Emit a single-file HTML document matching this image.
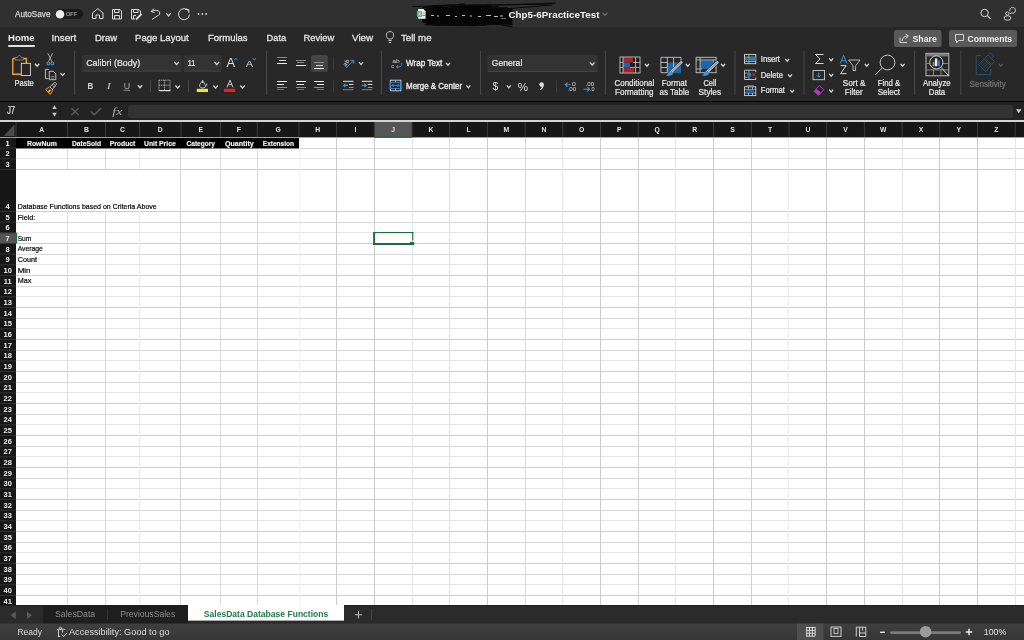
<!DOCTYPE html>
<html><head><meta charset="utf-8"><style>
html,body{margin:0;padding:0;width:1024px;height:640px;overflow:hidden;background:#262626;}
svg{position:absolute;left:0;top:0;display:block;will-change:transform;}
</style></head><body>
<svg width="1024" height="640" viewBox="0 0 1024 640">
<rect x="0" y="0" width="1024" height="27" fill="#303030" />
<rect x="0" y="27" width="1024" height="74" fill="#282828" />
<rect x="0" y="101" width="1024" height="1" fill="#050505" />
<rect x="0" y="102" width="1024" height="18" fill="#232323" />
<rect x="0" y="120" width="1024" height="2" fill="#d4d4d4" />
<rect x="0" y="122" width="1024" height="16" fill="#171717" />
<rect x="0" y="138" width="1024" height="467" fill="#ffffff" />
<text x="15" y="17" font-size="8.6" fill="#d6d6d6" style="font-family:&quot;Liberation Sans&quot;,sans-serif" textLength="35.5" lengthAdjust="spacingAndGlyphs" stroke="#d6d6d6" stroke-width="0.25" >AutoSave</text>
<rect x="55" y="9" width="28" height="10" fill="#1a1a1a" rx="5" />
<circle cx="60" cy="14.2" r="4.3" fill="#ececec"/>
<text x="66" y="16.3" font-size="5.6" fill="#a8a8a8" style="font-family:&quot;Liberation Sans&quot;,sans-serif" textLength="11" lengthAdjust="spacingAndGlyphs" stroke="#a8a8a8" stroke-width="0.15" >OFF</text>
<path d="M92.5 18.5 V13 L97.8 8.5 L103 13 V18.5 H99.5 V15 H96 V18.5 Z" stroke="#d8d8d8" stroke-width="1" fill="none" />
<path d="M112.5 9.5 H120 L121.5 11 V19 H112.5 Z M114.5 9.5 V12.5 H119 V9.5 M114.5 19 V15.5 H119.5 V19" stroke="#d8d8d8" stroke-width="1" fill="none" />
<path d="M131.5 9.5 H139 L140.5 11 V14 M131.5 9.5 V19 H135 M133.5 9.5 V12.5 H138 V9.5 M133.5 19 V15.5 H136" stroke="#d8d8d8" stroke-width="1" fill="none" />
<path d="M136 19.5 L141.5 14" stroke="#d8d8d8" stroke-width="1.8" fill="none" />
<path d="M151 11.5 L154 8.5 M151 11.5 L154.5 12.5 M151.3 11.5 C156 9 161 10.5 159.5 14.5 L152 19.5" stroke="#d8d8d8" stroke-width="1" fill="none" />
<path d="M166.25 13.1 L168.5 15.9 L170.75 13.1" stroke="#cfcfcf" stroke-width="1.25" fill="none" />
<path d="M188.5 11 A5.5 5.5 0 1 0 189.5 14.5" stroke="#d8d8d8" stroke-width="1" fill="none" />
<path d="M185 9.2 L188.8 9.5 L188.8 13" stroke="#d8d8d8" stroke-width="1" fill="none" />
<circle cx="198.5" cy="14" r="0.9" fill="#d8d8d8"/>
<circle cx="202.3" cy="14" r="0.9" fill="#d8d8d8"/>
<circle cx="206.1" cy="14" r="0.9" fill="#d8d8d8"/>
<rect x="425.8" y="7.5" width="84" height="16.5" fill="#060606" rx="3" />
<rect x="422" y="10" width="10" height="13" fill="#060606" rx="3" />
<path d="M445.9 18.4 L466.2 15.8 M462.9 7.1 L490.7 7.1 M423.0 7.3 L453.2 4.9 M454.0 8.4 L497.9 6.7 M470.2 17.0 L512.0 16.3 M498.1 22.3 L512.0 21.0 M431.5 11.9 L450.7 13.8 M434.5 18.1 L469.8 17.4 M463.8 7.1 L481.0 5.4 M474.4 12.0 L504.4 12.5 M456.3 21.1 L481.7 22.3 M439.5 16.0 L474.6 18.2 M478.4 24.6 L503.4 22.3 M453.4 8.9 L494.9 8.8 M423.1 20.5 L461.5 21.0 M490.0 19.2 L512.0 19.8 M466.4 22.0 L497.4 24.6 M457.9 7.2 L496.2 8.4 M471.8 21.6 L512.0 20.3 M450.9 6.4 L489.3 6.2 M433.4 7.1 L452.5 8.7 M430.3 13.4 L454.0 15.7 M426.4 16.4 L457.2 18.7 M485.5 11.3 L512.0 10.8 M448.7 24.2 L494.6 22.1 M434.1 10.4 L457.2 10.3 M467.1 6.1 L491.3 5.6 M449.5 24.1 L484.4 25.3 M461.2 18.8 L497.9 16.2 M492.0 22.6 L512.0 24.4 M451.4 8.0 L480.4 8.8 M425.0 10.0 L442.3 7.9 M447.2 6.0 L464.0 3.9 M428.1 6.5 L455.8 8.7 M469.1 10.8 L489.3 9.9 M449.1 22.1 L468.4 25.1 M457.3 7.6 L489.2 5.2 M447.4 21.7 L471.7 19.7 M421.8 16.0 L470.1 13.9 M463.5 16.0 L479.4 18.9 M489.1 11.0 L512.0 10.2 M433.4 16.1 L475.4 17.8 M446.4 21.4 L469.2 24.3 M488.2 21.5 L512.0 23.0 M438.1 12.8 L471.3 9.9 M422.2 10.9 L447.0 12.1 M496.5 23.8 L512.0 26.7 M496.4 10.2 L512.0 8.5 M435.7 17.9 L457.9 20.3 M487.2 18.4 L512.0 20.2 M426.8 23.3 L464.9 25.0 M480.0 9.4 L511.7 11.1 M446.6 24.5 L489.6 23.8 M452.1 19.8 L500.2 17.8 M430.2 23.2 L450.5 25.0 M431.7 24.6 L475.6 25.6 M448.0 8.5 L482.2 5.6 M497.7 16.0 L512.0 18.6 M454.7 21.7 L500.2 20.0 M440.1 10.6 L465.4 11.1 M440.7 8.5 L470.4 11.0 M448.3 17.1 L479.3 19.5 M453.7 15.5 L500.8 15.7 M461.9 14.4 L477.5 12.5 M420.3 9.3 L463.3 9.1 M478.0 12.2 L512.0 12.3 M464.4 8.0 L506.9 8.4 M439.9 20.7 L464.6 20.7 M464.9 23.3 L506.5 23.0 M469.0 15.7 L501.7 16.9" stroke="#050505" stroke-width="1.3" fill="none" stroke-linecap="round"/>
<path d="M413 6.5 C450 5 500 6 555 3.2" stroke="#0a0a0a" stroke-width="1.2" fill="none" stroke-linecap="round"/>
<path d="M432 5.5 C470 4.5 520 4.8 548 4" stroke="#0a0a0a" stroke-width="0.9" fill="none" stroke-linecap="round"/>
<path d="M505 9 C520 7.5 535 6.5 552 5" stroke="#0a0a0a" stroke-width="1.0" fill="none" stroke-linecap="round"/>
<path d="M425 24.5 C450 25.5 480 25 510 23.5" stroke="#0a0a0a" stroke-width="1.3" fill="none" stroke-linecap="round"/>
<rect x="431" y="15" width="3" height="1" fill="#bdbdbd" />
<rect x="437" y="15.5" width="2" height="1" fill="#bdbdbd" />
<rect x="446" y="15" width="4" height="1" fill="#bdbdbd" />
<rect x="455" y="16" width="2" height="1" fill="#bdbdbd" />
<rect x="462" y="15" width="3" height="1" fill="#bdbdbd" />
<rect x="470" y="15.5" width="2" height="1" fill="#bdbdbd" />
<rect x="478" y="16" width="3" height="1" fill="#bdbdbd" />
<rect x="486" y="15" width="5" height="1" fill="#bdbdbd" />
<rect x="494" y="16" width="4" height="1" fill="#bdbdbd" />
<rect x="500" y="15.5" width="3" height="1" fill="#bdbdbd" />
<path d="M418.2 9 H423.4 L425.6 11.2 V18.7 H418.2 Z" stroke="none" stroke-width="1" fill="#f4f4f4" />
<rect x="416.9" y="11" width="5.3" height="5.9" fill="#5db487" rx="0.6" />
<path d="M418.7 12.4 L420.6 15.6 M420.6 12.4 L418.7 15.6" stroke="#f4f4f4" stroke-width="0.7" fill="none" />
<rect x="423" y="12.6" width="2.4" height="1.3" fill="#7cc9a0" />
<rect x="422.6" y="15.2" width="3" height="0.6" fill="#333333" />
<text x="501" y="18" font-size="9" fill="#f0f0f0" style="font-family:&quot;Liberation Sans&quot;,sans-serif" font-weight="700" >_</text>
<text x="508.5" y="17.5" font-size="9" fill="#f2f2f2" style="font-family:&quot;Liberation Sans&quot;,sans-serif" font-weight="700" textLength="91" lengthAdjust="spacingAndGlyphs" >Chp5-6PracticeTest</text>
<path d="M602.5 12.75 L605 15.25 L607.5 12.75" stroke="#6a6a6a" stroke-width="1.25" fill="none" />
<circle cx="984.6" cy="13" r="3.7" fill="none" stroke="#d8d8d8" stroke-width="1"/>
<path d="M987.3 15.7 L990.6 18.9" stroke="#d8d8d8" stroke-width="1.1" fill="none" />
<circle cx="1007.4" cy="13.6" r="1.7" fill="none" stroke="#d8d8d8" stroke-width="0.9"/>
<ellipse cx="1007.5" cy="18" rx="3.4" ry="2.2" fill="none" stroke="#d8d8d8" stroke-width="0.9"/>
<path d="M1010.2 14 L1011 12.8 A2.9 2.9 0 1 0 1009.8 11.2" stroke="#d8d8d8" stroke-width="0.9" fill="none" />
<text x="8" y="40.8" font-size="9.8" fill="#eeeeee" style="font-family:&quot;Liberation Sans&quot;,sans-serif" font-weight="700" textLength="26.5" lengthAdjust="spacingAndGlyphs" >Home</text>
<rect x="8" y="45" width="27" height="2" fill="#e0e0e0" rx="1" />
<text x="51.5" y="40.8" font-size="9.8" fill="#e2e2e2" style="font-family:&quot;Liberation Sans&quot;,sans-serif" textLength="24.700000000000003" lengthAdjust="spacingAndGlyphs" stroke="#e2e2e2" stroke-width="0.3" >Insert</text>
<text x="95" y="40.8" font-size="9.8" fill="#e2e2e2" style="font-family:&quot;Liberation Sans&quot;,sans-serif" textLength="22.200000000000003" lengthAdjust="spacingAndGlyphs" stroke="#e2e2e2" stroke-width="0.3" >Draw</text>
<text x="135" y="40.8" font-size="9.8" fill="#e2e2e2" style="font-family:&quot;Liberation Sans&quot;,sans-serif" textLength="53.80000000000001" lengthAdjust="spacingAndGlyphs" stroke="#e2e2e2" stroke-width="0.3" >Page Layout</text>
<text x="208" y="40.8" font-size="9.8" fill="#e2e2e2" style="font-family:&quot;Liberation Sans&quot;,sans-serif" textLength="39.599999999999994" lengthAdjust="spacingAndGlyphs" stroke="#e2e2e2" stroke-width="0.3" >Formulas</text>
<text x="266.6" y="40.8" font-size="9.8" fill="#e2e2e2" style="font-family:&quot;Liberation Sans&quot;,sans-serif" textLength="19.599999999999966" lengthAdjust="spacingAndGlyphs" stroke="#e2e2e2" stroke-width="0.3" >Data</text>
<text x="303.5" y="40.8" font-size="9.8" fill="#e2e2e2" style="font-family:&quot;Liberation Sans&quot;,sans-serif" textLength="30.69999999999999" lengthAdjust="spacingAndGlyphs" stroke="#e2e2e2" stroke-width="0.3" >Review</text>
<text x="352" y="40.8" font-size="9.8" fill="#e2e2e2" style="font-family:&quot;Liberation Sans&quot;,sans-serif" textLength="21.19999999999999" lengthAdjust="spacingAndGlyphs" stroke="#e2e2e2" stroke-width="0.3" >View</text>
<text x="401" y="40.8" font-size="9.8" fill="#e2e2e2" style="font-family:&quot;Liberation Sans&quot;,sans-serif" textLength="30.5" lengthAdjust="spacingAndGlyphs" stroke="#e2e2e2" stroke-width="0.3" >Tell me</text>
<path d="M388.2 39 C386.6 37.2 386.4 35.8 386.4 35 C386.4 32.8 388 31.6 390 31.6 C392 31.6 393.6 32.8 393.6 35 C393.6 35.8 393.4 37.2 391.8 39 Z" stroke="#d0d0d0" stroke-width="0.9" fill="none" />
<rect x="388.5" y="40" width="3" height="1" fill="#d0d0d0" />
<rect x="388.8" y="42" width="2.4" height="1" fill="#d0d0d0" />
<rect x="894" y="30" width="47.5" height="17" fill="#5a5a5a" rx="2.5" />
<rect x="949" y="30" width="68" height="17" fill="#5a5a5a" rx="2.5" />
<path d="M900 37.5 V42.5 H907" stroke="#dedede" stroke-width="0.9" fill="none" />
<path d="M902 41 C902.5 37.5 904.5 36 907.5 36 M905.5 34 L908.5 36 L905.5 38.5" stroke="#dedede" stroke-width="0.9" fill="none" />
<text x="912.5" y="42.2" font-size="9" fill="#efefef" style="font-family:&quot;Liberation Sans&quot;,sans-serif" font-weight="700" textLength="24.3" lengthAdjust="spacingAndGlyphs" >Share</text>
<path d="M955.5 34.5 H963.5 V40.5 H958.5 L956.5 43 V40.5 H955.5 Z" stroke="#dedede" stroke-width="0.9" fill="none" />
<text x="967.5" y="42.2" font-size="9" fill="#efefef" style="font-family:&quot;Liberation Sans&quot;,sans-serif" font-weight="700" textLength="44.6" lengthAdjust="spacingAndGlyphs" >Comments</text>
<path d="M12.8 58.5 H15.3 M23.6 58.5 H26.3 V63 M12.8 58.5 V74.3 H21" stroke="#f0a030" stroke-width="1.4" fill="none" />
<path d="M15.2 60 V57.6 H17.6 C17.8 56.2 18.5 55.4 19.4 55.4 C20.3 55.4 21 56.2 21.2 57.6 H23.6 V60 Z" stroke="#8a8a8a" stroke-width="0.9" fill="#262626" />
<rect x="21.3" y="63.3" width="9.1" height="12.2" fill="#262626" stroke="#dadada" stroke-width="0.9"/>
<path d="M35.0 63.75 L37.1 66.25 L39.2 63.75" stroke="#e0e0e0" stroke-width="1.25" fill="none" />
<text x="14.5" y="85.9" font-size="8.2" fill="#e8e8e8" style="font-family:&quot;Liberation Sans&quot;,sans-serif" textLength="19.2" lengthAdjust="spacingAndGlyphs" stroke="#e8e8e8" stroke-width="0.22" >Paste</text>
<path d="M47.8 53.2 L52 61.8 M52.6 53.2 L48.4 61.8" stroke="#c8c8c8" stroke-width="0.8" fill="none" />
<circle cx="48.3" cy="63.4" r="1.35" fill="none" stroke="#3a96dd" stroke-width="1.1"/><circle cx="52.3" cy="63.4" r="1.35" fill="none" stroke="#3a96dd" stroke-width="1.1"/>
<path d="M48.8 69.4 H45.4 V78.6 H48.6" stroke="#d0d0d0" stroke-width="0.9" fill="none" />
<path d="M49.3 71.3 H53.3 L55.8 73.8 V79.7 H49.3 Z" stroke="#d0d0d0" stroke-width="0.9" fill="none" />
<rect x="50.8" y="76.2" width="3.5" height="1" fill="#9a9a9a" />
<rect x="50.8" y="78" width="3.5" height="0.8" fill="#6a6a6a" />
<path d="M60.5 73.15 L62.6 75.65 L64.7 73.15" stroke="#e0e0e0" stroke-width="1.25" fill="none" />
<path d="M45.6 89.6 L49.8 86.8 L53 90 L50.2 94.4 Z" stroke="#f0a030" stroke-width="1" fill="#262626" />
<path d="M47.5 91.5 L50 89 L51.2 90.2 L49 93 Z" stroke="none" stroke-width="1" fill="#f0a030" />
<path d="M50.2 86.5 L54 82.9 C54.8 82.2 55.8 82.6 56.2 83.2 C56.6 83.9 56.4 84.6 55.8 85.2 L52.6 89.2" stroke="#cfcfcf" stroke-width="0.9" fill="none" />
<path d="M52.3 85.2 L54.5 87.2 M53.5 84 L55.5 85.9" stroke="#cfcfcf" stroke-width="0.7" fill="none" />
<rect x="74" y="51" width="1" height="44" fill="#474747" />
<rect x="82" y="55" width="99.5" height="16.5" fill="#333333" rx="2.5" />
<rect x="183.5" y="55" width="38" height="16.5" fill="#333333" rx="2.5" />
<rect x="82.5" y="70.6" width="98.5" height="0.9" fill="#484848" />
<rect x="184" y="70.6" width="37" height="0.9" fill="#484848" />
<text x="86.2" y="65.8" font-size="8.8" fill="#e6e6e6" style="font-family:&quot;Liberation Sans&quot;,sans-serif" textLength="54" lengthAdjust="spacingAndGlyphs" stroke="#e6e6e6" stroke-width="0.2" >Calibri (Body)</text>
<path d="M174.35 62.0 L176.6 64.6 L178.85 62.0" stroke="#d8d8d8" stroke-width="1.25" fill="none" />
<text x="187.8" y="65.8" font-size="8.8" fill="#e6e6e6" style="font-family:&quot;Liberation Sans&quot;,sans-serif" textLength="7.5" lengthAdjust="spacingAndGlyphs" stroke="#e6e6e6" stroke-width="0.2" >11</text>
<path d="M214.55 62.0 L216.8 64.6 L219.05 62.0" stroke="#d8d8d8" stroke-width="1.25" fill="none" />
<text x="226.6" y="67" font-size="12" fill="#dcdcdc" style="font-family:&quot;Liberation Sans&quot;,sans-serif" textLength="8.6" lengthAdjust="spacingAndGlyphs" >A</text>
<path d="M234.4 60.2 L235.9 58.2 L237.4 60.2" stroke="#3a96dd" stroke-width="1" fill="none" />
<text x="245.8" y="67" font-size="9" fill="#dcdcdc" style="font-family:&quot;Liberation Sans&quot;,sans-serif" textLength="7.4" lengthAdjust="spacingAndGlyphs" >A</text>
<path d="M252.8 58.2 L254.3 60.2 L255.8 58.2" stroke="#3a96dd" stroke-width="1" fill="none" />
<text x="87.4" y="88.6" font-size="9" fill="#d8d8d8" style="font-family:&quot;Liberation Sans&quot;,sans-serif" font-weight="700" textLength="5.8" lengthAdjust="spacingAndGlyphs" >B</text>
<text x="106.5" y="88.6" font-size="9" fill="#bcbcbc" style="font-family:&quot;Liberation Serif&quot;,serif" font-style="italic" textLength="4.5" lengthAdjust="spacingAndGlyphs" >I</text>
<text x="123.7" y="88.6" font-size="9" fill="#a8a8a8" style="font-family:&quot;Liberation Sans&quot;,sans-serif" textLength="6.4" lengthAdjust="spacingAndGlyphs" >U</text>
<rect x="123.5" y="89.8" width="6.5" height="0.8" fill="#a8a8a8" />
<path d="M137.9 85.25 L140 87.75 L142.1 85.25" stroke="#d8d8d8" stroke-width="1.25" fill="none" />
<rect x="150" y="80" width="1" height="12.3" fill="#474747" />
<path d="M159 80.2 H170 M159 85.2 H170 M159 80.2 V90 M170 80.2 V90 M164.5 80.2 V90" stroke="#c8c8c8" stroke-width="0.9" fill="none" stroke-dasharray="1.2 0.9"/>
<rect x="158.7" y="90" width="11.8" height="1.2" fill="#e0e0e0" />
<path d="M175.45 85.5 L177.7 88.1 L179.95 85.5" stroke="#d8d8d8" stroke-width="1.25" fill="none" />
<rect x="188" y="80" width="1" height="12" fill="#474747" />
<path d="M202.6 80.4 C201.5 82.5 199.6 84 199.6 85.6 C199.6 87.2 200.9 88 202.8 88 C204.6 88 205.6 87 205.6 85.8 L202.6 80.4 Z M202.6 80.4 V83" stroke="#d8d8d8" stroke-width="0.9" fill="none" />
<path d="M206.7 83.2 V86.3" stroke="#3a96dd" stroke-width="1.3" fill="none" />
<rect x="196.8" y="88.8" width="11.2" height="3.2" fill="#f3e81d" />
<path d="M213.35 85.5 L215.6 88.1 L217.85 85.5" stroke="#d8d8d8" stroke-width="1.25" fill="none" />
<path d="M227 87.3 L230 80.2 L233 87.3 M228.2 84.7 H231.8" stroke="#d8d8d8" stroke-width="0.9" fill="none" />
<rect x="223.9" y="88.8" width="11.4" height="3.2" fill="#ec1c24" />
<path d="M240.25 85.5 L242.5 88.1 L244.75 85.5" stroke="#d8d8d8" stroke-width="1.25" fill="none" />
<rect x="266" y="51" width="1" height="44" fill="#474747" />
<rect x="277" y="57" width="10" height="1" fill="#8a8a8a" />
<rect x="279" y="60" width="7" height="1" fill="#d8d8d8" />
<rect x="277" y="63" width="10" height="1" fill="#f0f0f0" />
<rect x="296" y="60" width="10" height="1" fill="#8a8a8a" />
<rect x="297" y="62" width="7" height="1" fill="#8a8a8a" />
<rect x="296" y="65" width="10" height="1" fill="#e8e8e8" />
<rect x="311" y="55" width="16.8" height="16.7" fill="#454545" rx="2.5" />
<rect x="314" y="62" width="10" height="1" fill="#8a8a8a" />
<rect x="316" y="65" width="7" height="1" fill="#d8d8d8" />
<rect x="314" y="68" width="10" height="1" fill="#f4f4f4" />
<rect x="333" y="56.8" width="1" height="13" fill="#3a3a3a" />
<text x="341.5" y="65" font-size="6.4" fill="#d8d8d8" style="font-family:&quot;Liberation Sans&quot;,sans-serif" textLength="7.2" lengthAdjust="spacingAndGlyphs" transform="rotate(-60 345.5 62)">ab</text>
<path d="M346.2 68 L353.6 60.6 M350.4 60.4 H353.8 V63.8" stroke="#3a96dd" stroke-width="1" fill="none" />
<path d="M359.0 62.05 L361 64.55 L363.0 62.05" stroke="#d8d8d8" stroke-width="1.25" fill="none" />
<rect x="277" y="81" width="10" height="1" fill="#f0f0f0" />
<rect x="277" y="84" width="7" height="1" fill="#e8e8e8" />
<rect x="277" y="87" width="10" height="1" fill="#8e8e8e" />
<rect x="277" y="89" width="7" height="1" fill="#6e6e6e" />
<rect x="296" y="81" width="10" height="1" fill="#f0f0f0" />
<rect x="297" y="84" width="7" height="1" fill="#e8e8e8" />
<rect x="296" y="87" width="10" height="1" fill="#8e8e8e" />
<rect x="297" y="89" width="7" height="1" fill="#6e6e6e" />
<rect x="314" y="81" width="10" height="1" fill="#f0f0f0" />
<rect x="317" y="84" width="7" height="1" fill="#e8e8e8" />
<rect x="314" y="87" width="10" height="1" fill="#8e8e8e" />
<rect x="317" y="89" width="7" height="1" fill="#6e6e6e" />
<rect x="333" y="79.6" width="1" height="12.4" fill="#3a3a3a" />
<rect x="343" y="80.8" width="10.5" height="1" fill="#e8e8e8" />
<rect x="349" y="83.9" width="4.5" height="1" fill="#e0e0e0" />
<rect x="349" y="87" width="4.5" height="1" fill="#9a9a9a" />
<rect x="343" y="89.3" width="10.5" height="0.9" fill="#8a8a8a" />
<rect x="361.8" y="80.8" width="10.5" height="1" fill="#e8e8e8" />
<rect x="367.8" y="83.9" width="4.5" height="1" fill="#e0e0e0" />
<rect x="367.8" y="87" width="4.5" height="1" fill="#9a9a9a" />
<rect x="361.8" y="89.3" width="10.5" height="0.9" fill="#8a8a8a" />
<path d="M343.6 85.4 H348 M345.4 83.6 L343.6 85.4 L345.4 87.2" stroke="#3a96dd" stroke-width="1.1" fill="none" />
<path d="M361.8 85.4 H366.2 M364.4 83.6 L366.2 85.4 L364.4 87.2" stroke="#3a96dd" stroke-width="1.1" fill="none" />
<rect x="381" y="51" width="1" height="44" fill="#474747" />
<text x="392.2" y="63" font-size="5.6" fill="#d0d0d0" style="font-family:&quot;Liberation Sans&quot;,sans-serif" textLength="7.6" lengthAdjust="spacingAndGlyphs" >ab</text>
<text x="391.3" y="67.6" font-size="5.6" fill="#d0d0d0" style="font-family:&quot;Liberation Sans&quot;,sans-serif" textLength="3" lengthAdjust="spacingAndGlyphs" >c</text>
<path d="M401.6 62.8 V64.6 C401.6 66.2 400.6 66.8 399 66.8 H396.4 M398 65.2 L396.4 66.8 L398 68.4" stroke="#3a96dd" stroke-width="1" fill="none" />
<text x="406" y="66.1" font-size="8.2" fill="#e8e8e8" style="font-family:&quot;Liberation Sans&quot;,sans-serif" textLength="36.3" lengthAdjust="spacingAndGlyphs" stroke="#e8e8e8" stroke-width="0.35" >Wrap Text</text>
<path d="M446.0 62.8 L448 65.2 L450.0 62.8" stroke="#d8d8d8" stroke-width="1.25" fill="none" />
<rect x="390.3" y="80.2" width="10.6" height="10.6" fill="none" stroke="#d8d8d8" stroke-width="0.9"/>
<rect x="390.3" y="82.3" width="10.6" height="6.2" fill="none" stroke="#2a86d8" stroke-width="0.9"/>
<rect x="395.3" y="80.2" width="0.7" height="2" fill="#bbbbbb" />
<rect x="395.3" y="88.6" width="0.7" height="2.2" fill="#bbbbbb" />
<path d="M392 85.4 H399.2 M393.4 84 L392 85.4 L393.4 86.8 M397.8 84 L399.2 85.4 L397.8 86.8" stroke="#3a96dd" stroke-width="0.9" fill="none" />
<text x="406" y="88.9" font-size="8.2" fill="#e8e8e8" style="font-family:&quot;Liberation Sans&quot;,sans-serif" textLength="56.2" lengthAdjust="spacingAndGlyphs" stroke="#e8e8e8" stroke-width="0.35" >Merge &amp; Center</text>
<path d="M466.3 85.3 L468.3 87.7 L470.3 85.3" stroke="#d8d8d8" stroke-width="1.25" fill="none" />
<rect x="480" y="51" width="1" height="44" fill="#474747" />
<rect x="487.3" y="55" width="110.5" height="17" fill="#333333" rx="2.5" />
<rect x="487.8" y="71" width="109.5" height="0.9" fill="#484848" />
<text x="491.7" y="66.1" font-size="8.8" fill="#ececec" style="font-family:&quot;Liberation Sans&quot;,sans-serif" textLength="30.6" lengthAdjust="spacingAndGlyphs" stroke="#ececec" stroke-width="0.2" >General</text>
<path d="M589.95 62.5 L592.2 65.1 L594.45 62.5" stroke="#d8d8d8" stroke-width="1.25" fill="none" />
<text x="492.6" y="90.4" font-size="11" fill="#dcdcdc" style="font-family:&quot;Liberation Sans&quot;,sans-serif" textLength="5.8" lengthAdjust="spacingAndGlyphs" >$</text>
<path d="M506.8 85.39999999999999 L508.8 87.8 L510.8 85.39999999999999" stroke="#d8d8d8" stroke-width="1.25" fill="none" />
<text x="517.8" y="90.6" font-size="11.5" fill="#dcdcdc" style="font-family:&quot;Liberation Sans&quot;,sans-serif" textLength="10.3" lengthAdjust="spacingAndGlyphs" >%</text>
<circle cx="541.6" cy="84.6" r="2.3" fill="#dcdcdc"/>
<path d="M543.6 85 C543.8 87.5 542.5 89.2 540.2 89.9 L539.8 89.2 C541.2 88.5 541.8 87.5 541.8 86.2 Z" stroke="none" stroke-width="1" fill="#dcdcdc" />
<rect x="556" y="80" width="1" height="12" fill="#3a3a3a" />
<path d="M565.3 84.7 H570.5 M567.5 82.6 L565.3 84.7 L567.5 86.8" stroke="#3a96dd" stroke-width="1.1" fill="none" />
<text x="572" y="86.3" font-size="6" fill="#dcdcdc" style="font-family:&quot;Liberation Sans&quot;,sans-serif" textLength="3.8" lengthAdjust="spacingAndGlyphs" >0</text>
<text x="567.5" y="91.3" font-size="6" fill="#dcdcdc" style="font-family:&quot;Liberation Sans&quot;,sans-serif" textLength="8.6" lengthAdjust="spacingAndGlyphs" >.00</text>
<text x="585.5" y="86.3" font-size="6" fill="#dcdcdc" style="font-family:&quot;Liberation Sans&quot;,sans-serif" textLength="8.6" lengthAdjust="spacingAndGlyphs" >.00</text>
<path d="M583.5 89.2 H589.5 M587.3 87.1 L589.5 89.2 L587.3 91.3" stroke="#3a96dd" stroke-width="1.1" fill="none" />
<text x="590" y="91.3" font-size="6" fill="#dcdcdc" style="font-family:&quot;Liberation Sans&quot;,sans-serif" textLength="4.6" lengthAdjust="spacingAndGlyphs" >.0</text>
<rect x="605" y="51" width="1" height="44" fill="#474747" />
<rect x="620" y="57" width="20" height="16" fill="#1c1c1c" />
<rect x="623" y="57.3" width="10" height="5.1" fill="#a82228" />
<rect x="623" y="67.3" width="11.3" height="5.4" fill="#a82228" />
<rect x="623" y="62.5" width="6.9" height="4.7" fill="#1f66b0" />
<rect x="620" y="57" width="20" height="16" fill="none" stroke="#c4c4c4" stroke-width="0.9"/>
<rect x="622.6" y="57" width="0.9" height="16" fill="#c4c4c4" />
<rect x="635.2" y="57" width="0.9" height="16" fill="#c4c4c4" />
<rect x="620" y="62.1" width="3" height="0.8" fill="#c4c4c4" />
<rect x="620" y="66.9" width="3" height="0.8" fill="#c4c4c4" />
<rect x="634.3" y="62.1" width="5.7" height="0.8" fill="#c4c4c4" />
<rect x="629.9" y="66.9" width="10" height="0.8" fill="#c4c4c4" />
<rect x="633" y="62.1" width="2.5" height="0.8" fill="#c4c4c4" />
<path d="M645.0 63.8 L647 66.2 L649.0 63.8" stroke="#e0e0e0" stroke-width="1.25" fill="none" />
<text x="614.5" y="85.9" font-size="8.7" fill="#e8e8e8" style="font-family:&quot;Liberation Sans&quot;,sans-serif" textLength="39.8" lengthAdjust="spacingAndGlyphs" stroke="#e8e8e8" stroke-width="0.22" >Conditional</text>
<text x="615" y="94.5" font-size="8.7" fill="#e8e8e8" style="font-family:&quot;Liberation Sans&quot;,sans-serif" textLength="38.6" lengthAdjust="spacingAndGlyphs" stroke="#e8e8e8" stroke-width="0.22" >Formatting</text>
<rect x="667.25" y="62.5" width="13.75" height="10.2" fill="#1f66b0" />
<rect x="660.4499999999999" y="57.3" width="0.9" height="15.4" fill="#c4c4c4" />
<rect x="666.8" y="57.3" width="0.9" height="15.4" fill="#c4c4c4" />
<rect x="673.15" y="57.3" width="0.9" height="15.4" fill="#c4c4c4" />
<rect x="680.55" y="57.3" width="0.9" height="5" fill="#c4c4c4" />
<rect x="660.9" y="56.849999999999994" width="20.1" height="0.9" fill="#c4c4c4" />
<rect x="660.9" y="62.05" width="6.35" height="0.9" fill="#c4c4c4" />
<rect x="660.9" y="67.05" width="6.35" height="0.9" fill="#c4c4c4" />
<rect x="660.9" y="72.25" width="6.35" height="0.9" fill="#c4c4c4" />
<rect x="673.6" y="72.25" width="7.4" height="0.9" fill="#1f66b0" />
<path d="M681.3 62.4 L670.8 72.2" stroke="#262626" stroke-width="3.6" fill="none" stroke-linecap="round"/>
<path d="M681.3 62.4 L670.8 72.2" stroke="#d0d0d0" stroke-width="2.6" fill="none" stroke-linecap="round"/>
<path d="M681.3 62.4 L670.8 72.2" stroke="#5a5a5a" stroke-width="0.8" fill="none" />
<path d="M670.5 71.2 C668.5 71.5 668 74.5 665.8 75.5 C669.5 76.5 673.5 75.5 673 72.6 Z" stroke="none" stroke-width="1" fill="#3a96dd" />
<path d="M685.8 63.8 L687.8 66.2 L689.8 63.8" stroke="#e0e0e0" stroke-width="1.25" fill="none" />
<text x="661.7" y="85.9" font-size="8.7" fill="#e8e8e8" style="font-family:&quot;Liberation Sans&quot;,sans-serif" textLength="25.3" lengthAdjust="spacingAndGlyphs" stroke="#e8e8e8" stroke-width="0.22" >Format</text>
<text x="659.5" y="94.5" font-size="8.7" fill="#e8e8e8" style="font-family:&quot;Liberation Sans&quot;,sans-serif" textLength="29.6" lengthAdjust="spacingAndGlyphs" stroke="#e8e8e8" stroke-width="0.22" >as Table</text>
<rect x="700" y="60.1" width="13" height="8.8" fill="#1f66b0" />
<rect x="696.1" y="57.3" width="20" height="15.4" fill="none" stroke="#c4c4c4" stroke-width="0.9"/>
<rect x="699.6" y="57.3" width="0.9" height="15.4" fill="#c4c4c4" />
<rect x="696.1" y="59.5" width="20" height="0.8" fill="#c4c4c4" />
<rect x="696.1" y="68.6" width="6" height="0.8" fill="#c4c4c4" />
<rect x="713" y="59.5" width="0.8" height="3" fill="#c4c4c4" />
<path d="M717.3 62.4 L706.8 72.2" stroke="#262626" stroke-width="3.6" fill="none" stroke-linecap="round"/>
<path d="M717.3 62.4 L706.8 72.2" stroke="#d0d0d0" stroke-width="2.6" fill="none" stroke-linecap="round"/>
<path d="M717.3 62.4 L706.8 72.2" stroke="#5a5a5a" stroke-width="0.8" fill="none" />
<path d="M706.5 71.2 C704.5 71.5 704 74.5 701.8 75.5 C705.5 76.5 709.5 75.5 709 72.6 Z" stroke="none" stroke-width="1" fill="#3a96dd" />
<path d="M721.1 63.8 L723.1 66.2 L725.1 63.8" stroke="#e0e0e0" stroke-width="1.25" fill="none" />
<text x="703.4" y="85.9" font-size="8.7" fill="#e8e8e8" style="font-family:&quot;Liberation Sans&quot;,sans-serif" textLength="13" lengthAdjust="spacingAndGlyphs" stroke="#e8e8e8" stroke-width="0.22" >Cell</text>
<text x="698.6" y="94.5" font-size="8.7" fill="#e8e8e8" style="font-family:&quot;Liberation Sans&quot;,sans-serif" textLength="22.5" lengthAdjust="spacingAndGlyphs" stroke="#e8e8e8" stroke-width="0.22" >Styles</text>
<rect x="734.5" y="51" width="1" height="44" fill="#474747" />
<rect x="744.5" y="54.5" width="11.3" height="9.2" fill="none" stroke="#d0d0d0" stroke-width="0.9"/>
<rect x="744.5" y="56.8" width="11.3" height="0.7" fill="#d0d0d0" />
<rect x="744.5" y="61" width="11.3" height="0.7" fill="#d0d0d0" />
<rect x="748.6" y="54.5" width="0.7" height="9.2" fill="#d0d0d0" />
<rect x="748.8" y="57.6" width="6.8" height="3.2" fill="#1f66b0" />
<path d="M745.2 59.2 H755.6 M747.3 57.2 L745.2 59.2 L747.3 61.2" stroke="#3a96dd" stroke-width="1" fill="none" />
<path d="M744.5 70.2 H755.8 V72 M744.5 70.2 V79.5 H755.8 V77.5" stroke="#d0d0d0" stroke-width="0.9" fill="none" />
<rect x="744.5" y="72.7" width="3" height="0.7" fill="#d0d0d0" />
<rect x="744.5" y="76.8" width="3" height="0.7" fill="#d0d0d0" />
<rect x="748.6" y="70.2" width="0.7" height="3" fill="#d0d0d0" />
<rect x="748.6" y="76.5" width="0.7" height="3" fill="#d0d0d0" />
<rect x="747.3" y="72.8" width="3.8" height="3.8" fill="#2a7ad0" />
<path d="M752 72.6 L755.8 76.6 M755.8 72.6 L752 76.6" stroke="#e03030" stroke-width="1" fill="none" />
<rect x="744.5" y="86.8" width="11.3" height="8.8" fill="none" stroke="#d0d0d0" stroke-width="0.9"/>
<rect x="744.5" y="89.2" width="11.3" height="0.7" fill="#d0d0d0" />
<rect x="744.5" y="92.6" width="11.3" height="0.7" fill="#d0d0d0" />
<rect x="748.2" y="86.8" width="0.7" height="8.8" fill="#d0d0d0" />
<rect x="752" y="86.8" width="0.7" height="8.8" fill="#d0d0d0" />
<rect x="746.5" y="89.6" width="7.2" height="3.3" fill="#1f66b0" />
<path d="M746.8 85.6 H753.6 L754.6 86.6" stroke="#3a96dd" stroke-width="0.9" fill="none" />
<text x="760.8" y="62" font-size="8.7" fill="#e8e8e8" style="font-family:&quot;Liberation Sans&quot;,sans-serif" textLength="19.2" lengthAdjust="spacingAndGlyphs" stroke="#e8e8e8" stroke-width="0.22" >Insert</text>
<path d="M785.2 58.8 L787.2 61.2 L789.2 58.8" stroke="#d8d8d8" stroke-width="1.25" fill="none" />
<text x="760.8" y="77.8" font-size="8.7" fill="#e8e8e8" style="font-family:&quot;Liberation Sans&quot;,sans-serif" textLength="22.2" lengthAdjust="spacingAndGlyphs" stroke="#e8e8e8" stroke-width="0.22" >Delete</text>
<path d="M788.0 74.3 L790 76.7 L792.0 74.3" stroke="#d8d8d8" stroke-width="1.25" fill="none" />
<text x="760.8" y="93" font-size="8.7" fill="#e8e8e8" style="font-family:&quot;Liberation Sans&quot;,sans-serif" textLength="24" lengthAdjust="spacingAndGlyphs" stroke="#e8e8e8" stroke-width="0.22" >Format</text>
<path d="M790.1 89.8 L792.1 92.2 L794.1 89.8" stroke="#d8d8d8" stroke-width="1.25" fill="none" />
<rect x="803.5" y="51" width="1" height="44" fill="#474747" />
<path d="M823.5 54.5 H815.5 L820 59 L815.5 63.5 H823.5" stroke="#d8d8d8" stroke-width="1" fill="none" />
<path d="M829.2 58.3 L831.2 60.7 L833.2 58.3" stroke="#d8d8d8" stroke-width="1.25" fill="none" />
<rect x="813" y="70.5" width="11.5" height="9.2" fill="none" stroke="#cfcfcf" stroke-width="0.9"/>
<path d="M818.7 72.5 V77 M816.8 75.3 L818.7 77.2 L820.6 75.3" stroke="#3a96dd" stroke-width="1" fill="none" />
<path d="M829.2 73.8 L831.2 76.2 L833.2 73.8" stroke="#d8d8d8" stroke-width="1.25" fill="none" />
<path d="M814 91.3 L819.4 85.6 L824 89.6 L818.6 95.3 Z" stroke="#b03cc0" stroke-width="0.9" fill="none" />
<path d="M814 91.3 L816.4 88.7 L821 92.7 L818.6 95.3 Z" stroke="none" stroke-width="1" fill="#b03cc0" />
<path d="M829.2 89.6 L831.2 92.0 L833.2 89.6" stroke="#d8d8d8" stroke-width="1.25" fill="none" />
<path d="M840.2 63.6 L843.6 55.4 L847 63.6 M841.4 60.8 H845.8" stroke="#3a96dd" stroke-width="1" fill="none" />
<path d="M840.6 65.6 H846.2 L840.6 73.6 H846.6" stroke="#d8d8d8" stroke-width="1" fill="none" />
<path d="M848.6 60 H860 L855.6 65.8 V70.6 H853 V65.8 Z" stroke="#d8d8d8" stroke-width="0.8" fill="none" />
<path d="M864.8 63.8 L866.8 66.2 L868.8 63.8" stroke="#d8d8d8" stroke-width="1.25" fill="none" />
<text x="842.8" y="85.9" font-size="8.7" fill="#e8e8e8" style="font-family:&quot;Liberation Sans&quot;,sans-serif" textLength="22.6" lengthAdjust="spacingAndGlyphs" stroke="#e8e8e8" stroke-width="0.22" >Sort &amp;</text>
<text x="844.8" y="94.5" font-size="8.7" fill="#e8e8e8" style="font-family:&quot;Liberation Sans&quot;,sans-serif" textLength="17.8" lengthAdjust="spacingAndGlyphs" stroke="#e8e8e8" stroke-width="0.22" >Filter</text>
<circle cx="887.5" cy="62.5" r="7.4" fill="none" stroke="#d8d8d8" stroke-width="0.9"/>
<path d="M882.3 67.8 L875.3 75" stroke="#d8d8d8" stroke-width="0.9" fill="none" />
<path d="M900.6 63.8 L902.6 66.2 L904.6 63.8" stroke="#d8d8d8" stroke-width="1.25" fill="none" />
<text x="877.7" y="85.9" font-size="8.7" fill="#e8e8e8" style="font-family:&quot;Liberation Sans&quot;,sans-serif" textLength="22.5" lengthAdjust="spacingAndGlyphs" stroke="#e8e8e8" stroke-width="0.22" >Find &amp;</text>
<text x="877.7" y="94.5" font-size="8.7" fill="#e8e8e8" style="font-family:&quot;Liberation Sans&quot;,sans-serif" textLength="22.3" lengthAdjust="spacingAndGlyphs" stroke="#e8e8e8" stroke-width="0.22" >Select</text>
<rect x="914" y="51" width="1" height="44" fill="#474747" />
<rect x="926" y="53.3" width="22.8" height="22.5" fill="none" stroke="#cfcfcf" stroke-width="0.9"/>
<rect x="926.5" y="53.8" width="21.8" height="2.6" fill="#7a7a7a" />
<rect x="926.5" y="63" width="22" height="0.8" fill="#9a9a9a" />
<rect x="926.5" y="69.5" width="22" height="0.8" fill="#9a9a9a" />
<rect x="933.2" y="69.5" width="0.8" height="6" fill="#9a9a9a" />
<rect x="940.6" y="69.5" width="0.8" height="6" fill="#9a9a9a" />
<circle cx="936.3" cy="62.4" r="6.6" fill="#262626" stroke="#dcdcdc" stroke-width="0.9"/>
<rect x="932.6" y="61.8" width="2" height="4.4" fill="#8a8a8a" />
<rect x="934.9" y="58.4" width="2.4" height="7.8" fill="#e8e8e8" />
<rect x="937.5" y="60.4" width="2.4" height="5.8" fill="#2a7ad0" />
<path d="M941.2 67.5 L948.6 75.6" stroke="#dcdcdc" stroke-width="1" fill="none" />
<text x="923" y="85.9" font-size="8.7" fill="#e8e8e8" style="font-family:&quot;Liberation Sans&quot;,sans-serif" textLength="27.7" lengthAdjust="spacingAndGlyphs" stroke="#e8e8e8" stroke-width="0.22" >Analyze</text>
<text x="928.8" y="94.5" font-size="8.7" fill="#e8e8e8" style="font-family:&quot;Liberation Sans&quot;,sans-serif" textLength="16.4" lengthAdjust="spacingAndGlyphs" stroke="#e8e8e8" stroke-width="0.22" >Data</text>
<rect x="960.3" y="51" width="1" height="44" fill="#474747" />
<path d="M981 55.5 H976.2 V74.5 H990.8 V69" stroke="#29506f" stroke-width="1" fill="none" />
<path d="M978.5 64.5 L984 59 L991 66 L985.5 71.5 Z" stroke="#29506f" stroke-width="0.9" fill="none" />
<path d="M980.5 64.6 L984.2 61 M982 66 L985.7 62.4 M983.5 67.5 L987.2 63.9 M985 69 L988.7 65.4" stroke="#29506f" stroke-width="0.7" fill="none" />
<path d="M985 58 L988 55 L994.5 61.5 L991.5 64.5 Z M988.5 54.5 L990.5 52.5 L994 56 L992 58" stroke="#29506f" stroke-width="0.9" fill="none" />
<path d="M998.8 63.8 L1000.8 66.2 L1002.8 63.8" stroke="#5a5a5a" stroke-width="1.25" fill="none" />
<text x="969.5" y="86.5" font-size="8.7" fill="#7a7a7a" style="font-family:&quot;Liberation Sans&quot;,sans-serif" textLength="36.4" lengthAdjust="spacingAndGlyphs" stroke="#7a7a7a" stroke-width="0.2" >Sensitivity</text>
<text x="6.9" y="114.2" font-size="10.2" fill="#e4e4e4" style="font-family:&quot;Liberation Sans&quot;,sans-serif" textLength="8.3" lengthAdjust="spacingAndGlyphs" stroke="#e4e4e4" stroke-width="0.15" >J7</text>
<path d="M52.3 109 L54.5 105.3 L56.7 109 Z" stroke="none" stroke-width="1" fill="#c8c8c8" />
<path d="M52.3 112.8 L54.5 116.7 L56.7 112.8 Z" stroke="none" stroke-width="1" fill="#c8c8c8" />
<rect x="60" y="102" width="1" height="18" fill="#1c1c1c" />
<path d="M71.5 108.2 L78.5 115 M78.5 108.2 L71.5 115" stroke="#5a5a5a" stroke-width="1.5" fill="none" />
<path d="M90.8 111.5 L94.5 114.8 L101 108" stroke="#5a5a5a" stroke-width="1.5" fill="none" />
<text x="112.3" y="115" font-size="10.5" fill="#a8a8a8" style="font-family:&quot;Liberation Serif&quot;,serif" font-style="italic" textLength="10" lengthAdjust="spacingAndGlyphs" >fx</text>
<rect x="128" y="105" width="885" height="13" fill="#323232" rx="2.5" />
<path d="M1016 109.3 H1021.5 L1018.75 113.3 Z" stroke="none" stroke-width="1" fill="#d0d0d0" />
<rect x="374.3" y="122" width="37.69999999999999" height="16" fill="#555555" />
<rect x="374.3" y="136.5" width="37.69999999999999" height="1.5" fill="#1f6e3d" />
<rect x="15.5" y="122" width="1" height="15" fill="#3a3a3a" />
<rect x="67.0" y="122" width="1" height="15" fill="#3a3a3a" />
<rect x="105.0" y="122" width="1" height="15" fill="#3a3a3a" />
<rect x="139.0" y="122" width="1" height="15" fill="#3a3a3a" />
<rect x="180.5" y="122" width="1" height="15" fill="#3a3a3a" />
<rect x="220.0" y="122" width="1" height="15" fill="#3a3a3a" />
<rect x="256.8" y="122" width="1" height="15" fill="#3a3a3a" />
<rect x="298.5" y="122" width="1" height="15" fill="#3a3a3a" />
<rect x="336.1" y="122" width="1" height="15" fill="#3a3a3a" />
<rect x="373.8" y="122" width="1" height="15" fill="#3a3a3a" />
<rect x="411.5" y="122" width="1" height="15" fill="#3a3a3a" />
<rect x="449.2" y="122" width="1" height="15" fill="#3a3a3a" />
<rect x="486.9" y="122" width="1" height="15" fill="#3a3a3a" />
<rect x="524.6" y="122" width="1" height="15" fill="#3a3a3a" />
<rect x="562.3000000000001" y="122" width="1" height="15" fill="#3a3a3a" />
<rect x="600.0000000000001" y="122" width="1" height="15" fill="#3a3a3a" />
<rect x="637.7000000000002" y="122" width="1" height="15" fill="#3a3a3a" />
<rect x="675.4000000000002" y="122" width="1" height="15" fill="#3a3a3a" />
<rect x="713.1000000000003" y="122" width="1" height="15" fill="#3a3a3a" />
<rect x="750.8000000000003" y="122" width="1" height="15" fill="#3a3a3a" />
<rect x="788.5000000000003" y="122" width="1" height="15" fill="#3a3a3a" />
<rect x="826.2000000000004" y="122" width="1" height="15" fill="#3a3a3a" />
<rect x="863.9000000000004" y="122" width="1" height="15" fill="#3a3a3a" />
<rect x="901.6000000000005" y="122" width="1" height="15" fill="#3a3a3a" />
<rect x="939.3000000000005" y="122" width="1" height="15" fill="#3a3a3a" />
<rect x="977.0000000000006" y="122" width="1" height="15" fill="#3a3a3a" />
<rect x="1014.7000000000006" y="122" width="1" height="15" fill="#3a3a3a" />
<path d="M3.5 136 L14.5 136 L14.5 124.5 Z" stroke="none" stroke-width="1" fill="#4a4a4a" />
<text x="41.75" y="132.2" font-size="6.8" fill="#e0e0e0" style="font-family:&quot;Liberation Sans&quot;,sans-serif" font-weight="700" text-anchor="middle" >A</text>
<text x="86.5" y="132.2" font-size="6.8" fill="#e0e0e0" style="font-family:&quot;Liberation Sans&quot;,sans-serif" font-weight="700" text-anchor="middle" >B</text>
<text x="122.5" y="132.2" font-size="6.8" fill="#e0e0e0" style="font-family:&quot;Liberation Sans&quot;,sans-serif" font-weight="700" text-anchor="middle" >C</text>
<text x="160.25" y="132.2" font-size="6.8" fill="#e0e0e0" style="font-family:&quot;Liberation Sans&quot;,sans-serif" font-weight="700" text-anchor="middle" >D</text>
<text x="200.75" y="132.2" font-size="6.8" fill="#e0e0e0" style="font-family:&quot;Liberation Sans&quot;,sans-serif" font-weight="700" text-anchor="middle" >E</text>
<text x="238.9" y="132.2" font-size="6.8" fill="#e0e0e0" style="font-family:&quot;Liberation Sans&quot;,sans-serif" font-weight="700" text-anchor="middle" >F</text>
<text x="278.15" y="132.2" font-size="6.8" fill="#e0e0e0" style="font-family:&quot;Liberation Sans&quot;,sans-serif" font-weight="700" text-anchor="middle" >G</text>
<text x="317.8" y="132.2" font-size="6.8" fill="#e0e0e0" style="font-family:&quot;Liberation Sans&quot;,sans-serif" font-weight="700" text-anchor="middle" >H</text>
<text x="355.45000000000005" y="132.2" font-size="6.8" fill="#e0e0e0" style="font-family:&quot;Liberation Sans&quot;,sans-serif" font-weight="700" text-anchor="middle" >I</text>
<text x="393.15" y="132.2" font-size="6.8" fill="#e0e0e0" style="font-family:&quot;Liberation Sans&quot;,sans-serif" font-weight="700" text-anchor="middle" >J</text>
<text x="430.85" y="132.2" font-size="6.8" fill="#e0e0e0" style="font-family:&quot;Liberation Sans&quot;,sans-serif" font-weight="700" text-anchor="middle" >K</text>
<text x="468.54999999999995" y="132.2" font-size="6.8" fill="#e0e0e0" style="font-family:&quot;Liberation Sans&quot;,sans-serif" font-weight="700" text-anchor="middle" >L</text>
<text x="506.25" y="132.2" font-size="6.8" fill="#e0e0e0" style="font-family:&quot;Liberation Sans&quot;,sans-serif" font-weight="700" text-anchor="middle" >M</text>
<text x="543.95" y="132.2" font-size="6.8" fill="#e0e0e0" style="font-family:&quot;Liberation Sans&quot;,sans-serif" font-weight="700" text-anchor="middle" >N</text>
<text x="581.6500000000001" y="132.2" font-size="6.8" fill="#e0e0e0" style="font-family:&quot;Liberation Sans&quot;,sans-serif" font-weight="700" text-anchor="middle" >O</text>
<text x="619.3500000000001" y="132.2" font-size="6.8" fill="#e0e0e0" style="font-family:&quot;Liberation Sans&quot;,sans-serif" font-weight="700" text-anchor="middle" >P</text>
<text x="657.0500000000002" y="132.2" font-size="6.8" fill="#e0e0e0" style="font-family:&quot;Liberation Sans&quot;,sans-serif" font-weight="700" text-anchor="middle" >Q</text>
<text x="694.7500000000002" y="132.2" font-size="6.8" fill="#e0e0e0" style="font-family:&quot;Liberation Sans&quot;,sans-serif" font-weight="700" text-anchor="middle" >R</text>
<text x="732.4500000000003" y="132.2" font-size="6.8" fill="#e0e0e0" style="font-family:&quot;Liberation Sans&quot;,sans-serif" font-weight="700" text-anchor="middle" >S</text>
<text x="770.1500000000003" y="132.2" font-size="6.8" fill="#e0e0e0" style="font-family:&quot;Liberation Sans&quot;,sans-serif" font-weight="700" text-anchor="middle" >T</text>
<text x="807.8500000000004" y="132.2" font-size="6.8" fill="#e0e0e0" style="font-family:&quot;Liberation Sans&quot;,sans-serif" font-weight="700" text-anchor="middle" >U</text>
<text x="845.5500000000004" y="132.2" font-size="6.8" fill="#e0e0e0" style="font-family:&quot;Liberation Sans&quot;,sans-serif" font-weight="700" text-anchor="middle" >V</text>
<text x="883.2500000000005" y="132.2" font-size="6.8" fill="#e0e0e0" style="font-family:&quot;Liberation Sans&quot;,sans-serif" font-weight="700" text-anchor="middle" >W</text>
<text x="920.9500000000005" y="132.2" font-size="6.8" fill="#e0e0e0" style="font-family:&quot;Liberation Sans&quot;,sans-serif" font-weight="700" text-anchor="middle" >X</text>
<text x="958.6500000000005" y="132.2" font-size="6.8" fill="#e0e0e0" style="font-family:&quot;Liberation Sans&quot;,sans-serif" font-weight="700" text-anchor="middle" >Y</text>
<text x="996.3500000000006" y="132.2" font-size="6.8" fill="#e0e0e0" style="font-family:&quot;Liberation Sans&quot;,sans-serif" font-weight="700" text-anchor="middle" >Z</text>
<rect x="0" y="137" width="374.3" height="1" fill="#a0a0a0" />
<rect x="412.0" y="137" width="612.0" height="1" fill="#a0a0a0" />
<rect x="0" y="138" width="16" height="467" fill="#171717" />
<rect x="0" y="232.834" width="16" height="10.667000000000002" fill="#555555" />
<rect x="16" y="138" width="283" height="10.5" fill="#000000" />
<rect x="16" y="148" width="1008" height="1" fill="#d8d8d8"/>
<rect x="16" y="158" width="1008" height="1" fill="#e6e6e6"/>
<rect x="16" y="169" width="1008" height="1" fill="#cdcdcd"/>
<rect x="16" y="211" width="1008" height="1" fill="#cdcdcd"/>
<rect x="16" y="222" width="1008" height="1" fill="#d8d8d8"/>
<rect x="16" y="232" width="1008" height="1" fill="#e6e6e6"/>
<rect x="16" y="243" width="1008" height="1" fill="#cdcdcd"/>
<rect x="16" y="254" width="1008" height="1" fill="#d8d8d8"/>
<rect x="16" y="264" width="1008" height="1" fill="#e6e6e6"/>
<rect x="16" y="275" width="1008" height="1" fill="#cdcdcd"/>
<rect x="16" y="286" width="1008" height="1" fill="#d8d8d8"/>
<rect x="16" y="296" width="1008" height="1" fill="#e6e6e6"/>
<rect x="16" y="307" width="1008" height="1" fill="#cdcdcd"/>
<rect x="16" y="318" width="1008" height="1" fill="#d8d8d8"/>
<rect x="16" y="328" width="1008" height="1" fill="#e6e6e6"/>
<rect x="16" y="339" width="1008" height="1" fill="#cdcdcd"/>
<rect x="16" y="350" width="1008" height="1" fill="#d8d8d8"/>
<rect x="16" y="360" width="1008" height="1" fill="#e6e6e6"/>
<rect x="16" y="371" width="1008" height="1" fill="#cdcdcd"/>
<rect x="16" y="382" width="1008" height="1" fill="#d8d8d8"/>
<rect x="16" y="392" width="1008" height="1" fill="#e6e6e6"/>
<rect x="16" y="403" width="1008" height="1" fill="#cdcdcd"/>
<rect x="16" y="414" width="1008" height="1" fill="#d8d8d8"/>
<rect x="16" y="424" width="1008" height="1" fill="#e6e6e6"/>
<rect x="16" y="435" width="1008" height="1" fill="#cdcdcd"/>
<rect x="16" y="446" width="1008" height="1" fill="#d8d8d8"/>
<rect x="16" y="456" width="1008" height="1" fill="#e6e6e6"/>
<rect x="16" y="467" width="1008" height="1" fill="#cdcdcd"/>
<rect x="16" y="478" width="1008" height="1" fill="#d8d8d8"/>
<rect x="16" y="488" width="1008" height="1" fill="#e6e6e6"/>
<rect x="16" y="499" width="1008" height="1" fill="#cdcdcd"/>
<rect x="16" y="510" width="1008" height="1" fill="#d8d8d8"/>
<rect x="16" y="520" width="1008" height="1" fill="#e6e6e6"/>
<rect x="16" y="531" width="1008" height="1" fill="#cdcdcd"/>
<rect x="16" y="542" width="1008" height="1" fill="#d8d8d8"/>
<rect x="16" y="552" width="1008" height="1" fill="#e6e6e6"/>
<rect x="16" y="563" width="1008" height="1" fill="#cdcdcd"/>
<rect x="16" y="574" width="1008" height="1" fill="#d8d8d8"/>
<rect x="16" y="584" width="1008" height="1" fill="#e6e6e6"/>
<rect x="16" y="595" width="1008" height="1" fill="#cdcdcd"/>
<rect x="67" y="138" width="1" height="31" fill="#dedede"/>
<rect x="67" y="211" width="1" height="394" fill="#dedede"/>
<rect x="105" y="138" width="1" height="31" fill="#d6d6d6"/>
<rect x="105" y="211" width="1" height="394" fill="#d6d6d6"/>
<rect x="139" y="138" width="1" height="31" fill="#ebebeb"/>
<rect x="139" y="211" width="1" height="394" fill="#ebebeb"/>
<rect x="180" y="138" width="1" height="467" fill="#d4d4d4"/>
<rect x="220" y="138" width="1" height="467" fill="#dcdcdc"/>
<rect x="257" y="138" width="1" height="467" fill="#d9d9d9"/>
<rect x="299" y="138" width="1" height="467" fill="#f2f2f2"/>
<rect x="336" y="138" width="1" height="467" fill="#cdcdcd"/>
<rect x="374" y="138" width="1" height="467" fill="#cdcdcd"/>
<rect x="412" y="138" width="1" height="467" fill="#e6e6e6"/>
<rect x="449" y="138" width="1" height="467" fill="#e0e0e0"/>
<rect x="487" y="138" width="1" height="467" fill="#cdcdcd"/>
<rect x="525" y="138" width="1" height="467" fill="#d8d8d8"/>
<rect x="562" y="138" width="1" height="467" fill="#e6e6e6"/>
<rect x="600" y="138" width="1" height="467" fill="#cdcdcd"/>
<rect x="638" y="138" width="1" height="467" fill="#d2d2d2"/>
<rect x="675" y="138" width="1" height="467" fill="#e6e6e6"/>
<rect x="713" y="138" width="1" height="467" fill="#cdcdcd"/>
<rect x="751" y="138" width="1" height="467" fill="#d0d0d0"/>
<rect x="788" y="138" width="1" height="467" fill="#ededed"/>
<rect x="826" y="138" width="1" height="467" fill="#cdcdcd"/>
<rect x="864" y="138" width="1" height="467" fill="#cdcdcd"/>
<rect x="902" y="138" width="1" height="467" fill="#e4e4e4"/>
<rect x="939" y="138" width="1" height="467" fill="#cdcdcd"/>
<rect x="977" y="138" width="1" height="467" fill="#cdcdcd"/>
<rect x="1015" y="138" width="1" height="467" fill="#e4e4e4"/>
<rect x="16" y="138" width="283" height="10.4" fill="#000000" />
<rect x="0" y="147.667" width="16" height="1" fill="#333333" />
<rect x="0" y="158.333" width="16" height="1" fill="#333333" />
<rect x="0" y="169.0" width="16" height="1" fill="#333333" />
<rect x="0" y="211.0" width="16" height="1" fill="#333333" />
<rect x="0" y="221.667" width="16" height="1" fill="#333333" />
<rect x="0" y="232.334" width="16" height="1" fill="#333333" />
<rect x="0" y="243.001" width="16" height="1" fill="#333333" />
<rect x="0" y="253.668" width="16" height="1" fill="#333333" />
<rect x="0" y="264.335" width="16" height="1" fill="#333333" />
<rect x="0" y="275.00199999999995" width="16" height="1" fill="#333333" />
<rect x="0" y="285.6689999999999" width="16" height="1" fill="#333333" />
<rect x="0" y="296.3359999999999" width="16" height="1" fill="#333333" />
<rect x="0" y="307.0029999999999" width="16" height="1" fill="#333333" />
<rect x="0" y="317.66999999999985" width="16" height="1" fill="#333333" />
<rect x="0" y="328.3369999999998" width="16" height="1" fill="#333333" />
<rect x="0" y="339.0039999999998" width="16" height="1" fill="#333333" />
<rect x="0" y="349.67099999999976" width="16" height="1" fill="#333333" />
<rect x="0" y="360.33799999999974" width="16" height="1" fill="#333333" />
<rect x="0" y="371.0049999999997" width="16" height="1" fill="#333333" />
<rect x="0" y="381.6719999999997" width="16" height="1" fill="#333333" />
<rect x="0" y="392.33899999999966" width="16" height="1" fill="#333333" />
<rect x="0" y="403.00599999999963" width="16" height="1" fill="#333333" />
<rect x="0" y="413.6729999999996" width="16" height="1" fill="#333333" />
<rect x="0" y="424.3399999999996" width="16" height="1" fill="#333333" />
<rect x="0" y="435.00699999999955" width="16" height="1" fill="#333333" />
<rect x="0" y="445.6739999999995" width="16" height="1" fill="#333333" />
<rect x="0" y="456.3409999999995" width="16" height="1" fill="#333333" />
<rect x="0" y="467.00799999999947" width="16" height="1" fill="#333333" />
<rect x="0" y="477.67499999999944" width="16" height="1" fill="#333333" />
<rect x="0" y="488.3419999999994" width="16" height="1" fill="#333333" />
<rect x="0" y="499.0089999999994" width="16" height="1" fill="#333333" />
<rect x="0" y="509.67599999999936" width="16" height="1" fill="#333333" />
<rect x="0" y="520.3429999999994" width="16" height="1" fill="#333333" />
<rect x="0" y="531.0099999999994" width="16" height="1" fill="#333333" />
<rect x="0" y="541.6769999999995" width="16" height="1" fill="#333333" />
<rect x="0" y="552.3439999999995" width="16" height="1" fill="#333333" />
<rect x="0" y="563.0109999999995" width="16" height="1" fill="#333333" />
<rect x="0" y="573.6779999999995" width="16" height="1" fill="#333333" />
<rect x="0" y="584.3449999999996" width="16" height="1" fill="#333333" />
<rect x="0" y="595.0119999999996" width="16" height="1" fill="#333333" />
<rect x="16" y="232.834" width="1.2" height="10.667000000000002" fill="#1f6e3d" />
<text x="7.7" y="145.5335" font-size="7.5" fill="#eeeeee" style="font-family:&quot;Liberation Sans&quot;,sans-serif" font-weight="700" text-anchor="middle" >1</text>
<text x="7.7" y="156.2" font-size="7.5" fill="#eeeeee" style="font-family:&quot;Liberation Sans&quot;,sans-serif" font-weight="700" text-anchor="middle" >2</text>
<text x="7.7" y="166.86649999999997" font-size="7.5" fill="#eeeeee" style="font-family:&quot;Liberation Sans&quot;,sans-serif" font-weight="700" text-anchor="middle" >3</text>
<text x="7.7" y="209.0" font-size="7.5" fill="#eeeeee" style="font-family:&quot;Liberation Sans&quot;,sans-serif" font-weight="700" text-anchor="middle" >4</text>
<text x="7.7" y="219.5335" font-size="7.5" fill="#eeeeee" style="font-family:&quot;Liberation Sans&quot;,sans-serif" font-weight="700" text-anchor="middle" >5</text>
<text x="7.7" y="230.20049999999998" font-size="7.5" fill="#eeeeee" style="font-family:&quot;Liberation Sans&quot;,sans-serif" font-weight="700" text-anchor="middle" >6</text>
<text x="7.7" y="240.8675" font-size="7.5" fill="#eeeeee" style="font-family:&quot;Liberation Sans&quot;,sans-serif" font-weight="700" text-anchor="middle" >7</text>
<text x="7.7" y="251.53449999999998" font-size="7.5" fill="#eeeeee" style="font-family:&quot;Liberation Sans&quot;,sans-serif" font-weight="700" text-anchor="middle" >8</text>
<text x="7.7" y="262.20149999999995" font-size="7.5" fill="#eeeeee" style="font-family:&quot;Liberation Sans&quot;,sans-serif" font-weight="700" text-anchor="middle" >9</text>
<text x="7.7" y="272.8685" font-size="7.5" fill="#eeeeee" style="font-family:&quot;Liberation Sans&quot;,sans-serif" font-weight="700" text-anchor="middle" >10</text>
<text x="7.7" y="283.5354999999999" font-size="7.5" fill="#eeeeee" style="font-family:&quot;Liberation Sans&quot;,sans-serif" font-weight="700" text-anchor="middle" >11</text>
<text x="7.7" y="294.20249999999993" font-size="7.5" fill="#eeeeee" style="font-family:&quot;Liberation Sans&quot;,sans-serif" font-weight="700" text-anchor="middle" >12</text>
<text x="7.7" y="304.86949999999985" font-size="7.5" fill="#eeeeee" style="font-family:&quot;Liberation Sans&quot;,sans-serif" font-weight="700" text-anchor="middle" >13</text>
<text x="7.7" y="315.5364999999999" font-size="7.5" fill="#eeeeee" style="font-family:&quot;Liberation Sans&quot;,sans-serif" font-weight="700" text-anchor="middle" >14</text>
<text x="7.7" y="326.2034999999998" font-size="7.5" fill="#eeeeee" style="font-family:&quot;Liberation Sans&quot;,sans-serif" font-weight="700" text-anchor="middle" >15</text>
<text x="7.7" y="336.8704999999998" font-size="7.5" fill="#eeeeee" style="font-family:&quot;Liberation Sans&quot;,sans-serif" font-weight="700" text-anchor="middle" >16</text>
<text x="7.7" y="347.53749999999974" font-size="7.5" fill="#eeeeee" style="font-family:&quot;Liberation Sans&quot;,sans-serif" font-weight="700" text-anchor="middle" >17</text>
<text x="7.7" y="358.20449999999977" font-size="7.5" fill="#eeeeee" style="font-family:&quot;Liberation Sans&quot;,sans-serif" font-weight="700" text-anchor="middle" >18</text>
<text x="7.7" y="368.8714999999997" font-size="7.5" fill="#eeeeee" style="font-family:&quot;Liberation Sans&quot;,sans-serif" font-weight="700" text-anchor="middle" >19</text>
<text x="7.7" y="379.5384999999997" font-size="7.5" fill="#eeeeee" style="font-family:&quot;Liberation Sans&quot;,sans-serif" font-weight="700" text-anchor="middle" >20</text>
<text x="7.7" y="390.20549999999963" font-size="7.5" fill="#eeeeee" style="font-family:&quot;Liberation Sans&quot;,sans-serif" font-weight="700" text-anchor="middle" >21</text>
<text x="7.7" y="400.87249999999966" font-size="7.5" fill="#eeeeee" style="font-family:&quot;Liberation Sans&quot;,sans-serif" font-weight="700" text-anchor="middle" >22</text>
<text x="7.7" y="411.5394999999996" font-size="7.5" fill="#eeeeee" style="font-family:&quot;Liberation Sans&quot;,sans-serif" font-weight="700" text-anchor="middle" >23</text>
<text x="7.7" y="422.2064999999996" font-size="7.5" fill="#eeeeee" style="font-family:&quot;Liberation Sans&quot;,sans-serif" font-weight="700" text-anchor="middle" >24</text>
<text x="7.7" y="432.8734999999995" font-size="7.5" fill="#eeeeee" style="font-family:&quot;Liberation Sans&quot;,sans-serif" font-weight="700" text-anchor="middle" >25</text>
<text x="7.7" y="443.54049999999955" font-size="7.5" fill="#eeeeee" style="font-family:&quot;Liberation Sans&quot;,sans-serif" font-weight="700" text-anchor="middle" >26</text>
<text x="7.7" y="454.20749999999947" font-size="7.5" fill="#eeeeee" style="font-family:&quot;Liberation Sans&quot;,sans-serif" font-weight="700" text-anchor="middle" >27</text>
<text x="7.7" y="464.8744999999995" font-size="7.5" fill="#eeeeee" style="font-family:&quot;Liberation Sans&quot;,sans-serif" font-weight="700" text-anchor="middle" >28</text>
<text x="7.7" y="475.5414999999994" font-size="7.5" fill="#eeeeee" style="font-family:&quot;Liberation Sans&quot;,sans-serif" font-weight="700" text-anchor="middle" >29</text>
<text x="7.7" y="486.20849999999945" font-size="7.5" fill="#eeeeee" style="font-family:&quot;Liberation Sans&quot;,sans-serif" font-weight="700" text-anchor="middle" >30</text>
<text x="7.7" y="496.87549999999936" font-size="7.5" fill="#eeeeee" style="font-family:&quot;Liberation Sans&quot;,sans-serif" font-weight="700" text-anchor="middle" >31</text>
<text x="7.7" y="507.5424999999994" font-size="7.5" fill="#eeeeee" style="font-family:&quot;Liberation Sans&quot;,sans-serif" font-weight="700" text-anchor="middle" >32</text>
<text x="7.7" y="518.2094999999995" font-size="7.5" fill="#eeeeee" style="font-family:&quot;Liberation Sans&quot;,sans-serif" font-weight="700" text-anchor="middle" >33</text>
<text x="7.7" y="528.8764999999994" font-size="7.5" fill="#eeeeee" style="font-family:&quot;Liberation Sans&quot;,sans-serif" font-weight="700" text-anchor="middle" >34</text>
<text x="7.7" y="539.5434999999995" font-size="7.5" fill="#eeeeee" style="font-family:&quot;Liberation Sans&quot;,sans-serif" font-weight="700" text-anchor="middle" >35</text>
<text x="7.7" y="550.2104999999995" font-size="7.5" fill="#eeeeee" style="font-family:&quot;Liberation Sans&quot;,sans-serif" font-weight="700" text-anchor="middle" >36</text>
<text x="7.7" y="560.8774999999996" font-size="7.5" fill="#eeeeee" style="font-family:&quot;Liberation Sans&quot;,sans-serif" font-weight="700" text-anchor="middle" >37</text>
<text x="7.7" y="571.5444999999995" font-size="7.5" fill="#eeeeee" style="font-family:&quot;Liberation Sans&quot;,sans-serif" font-weight="700" text-anchor="middle" >38</text>
<text x="7.7" y="582.2114999999997" font-size="7.5" fill="#eeeeee" style="font-family:&quot;Liberation Sans&quot;,sans-serif" font-weight="700" text-anchor="middle" >39</text>
<text x="7.7" y="592.8784999999996" font-size="7.5" fill="#eeeeee" style="font-family:&quot;Liberation Sans&quot;,sans-serif" font-weight="700" text-anchor="middle" >40</text>
<text x="7.7" y="603.5454999999997" font-size="7.5" fill="#eeeeee" style="font-family:&quot;Liberation Sans&quot;,sans-serif" font-weight="700" text-anchor="middle" >41</text>
<text x="26.9" y="146" font-size="7" fill="#f4f4f4" style="font-family:&quot;Liberation Sans&quot;,sans-serif" font-weight="700" textLength="30.0" lengthAdjust="spacingAndGlyphs" stroke="#f4f4f4" stroke-width="0.15" >RowNum</text>
<text x="72" y="146" font-size="7" fill="#f4f4f4" style="font-family:&quot;Liberation Sans&quot;,sans-serif" font-weight="700" textLength="29" lengthAdjust="spacingAndGlyphs" stroke="#f4f4f4" stroke-width="0.15" >DateSold</text>
<text x="109.7" y="146" font-size="7" fill="#f4f4f4" style="font-family:&quot;Liberation Sans&quot;,sans-serif" font-weight="700" textLength="25.700000000000003" lengthAdjust="spacingAndGlyphs" stroke="#f4f4f4" stroke-width="0.15" >Product</text>
<text x="144" y="146" font-size="7" fill="#f4f4f4" style="font-family:&quot;Liberation Sans&quot;,sans-serif" font-weight="700" textLength="31.69999999999999" lengthAdjust="spacingAndGlyphs" stroke="#f4f4f4" stroke-width="0.15" >Unit Price</text>
<text x="186.5" y="146" font-size="7" fill="#f4f4f4" style="font-family:&quot;Liberation Sans&quot;,sans-serif" font-weight="700" textLength="28.5" lengthAdjust="spacingAndGlyphs" stroke="#f4f4f4" stroke-width="0.15" >Category</text>
<text x="224.9" y="146" font-size="7" fill="#f4f4f4" style="font-family:&quot;Liberation Sans&quot;,sans-serif" font-weight="700" textLength="28.799999999999983" lengthAdjust="spacingAndGlyphs" stroke="#f4f4f4" stroke-width="0.15" >Quantity</text>
<text x="262.8" y="146" font-size="7" fill="#f4f4f4" style="font-family:&quot;Liberation Sans&quot;,sans-serif" font-weight="700" textLength="31.19999999999999" lengthAdjust="spacingAndGlyphs" stroke="#f4f4f4" stroke-width="0.15" >Extension</text>
<text x="17.7" y="208.8" font-size="7.6" fill="#000000" style="font-family:&quot;Liberation Sans&quot;,sans-serif" textLength="139" lengthAdjust="spacingAndGlyphs" stroke="#000000" stroke-width="0.2" >Database Functions based on Criteria Above</text>
<text x="17.7" y="219.8" font-size="7.6" fill="#000000" style="font-family:&quot;Liberation Sans&quot;,sans-serif" textLength="17.5" lengthAdjust="spacingAndGlyphs" stroke="#000000" stroke-width="0.2" >Field:</text>
<text x="17.7" y="240.6" font-size="7.6" fill="#000000" style="font-family:&quot;Liberation Sans&quot;,sans-serif" textLength="13.5" lengthAdjust="spacingAndGlyphs" stroke="#000000" stroke-width="0.2" >Sum</text>
<text x="17.7" y="251.3" font-size="7.6" fill="#000000" style="font-family:&quot;Liberation Sans&quot;,sans-serif" textLength="25.2" lengthAdjust="spacingAndGlyphs" stroke="#000000" stroke-width="0.2" >Average</text>
<text x="17.7" y="261.9" font-size="7.6" fill="#000000" style="font-family:&quot;Liberation Sans&quot;,sans-serif" textLength="19.2" lengthAdjust="spacingAndGlyphs" stroke="#000000" stroke-width="0.2" >Count</text>
<text x="17.7" y="272.6" font-size="7.6" fill="#000000" style="font-family:&quot;Liberation Sans&quot;,sans-serif" textLength="12.7" lengthAdjust="spacingAndGlyphs" stroke="#000000" stroke-width="0.2" >Min</text>
<text x="17.7" y="283.2" font-size="7.6" fill="#000000" style="font-family:&quot;Liberation Sans&quot;,sans-serif" textLength="13.6" lengthAdjust="spacingAndGlyphs" stroke="#000000" stroke-width="0.2" >Max</text>
<rect x="373.1" y="232" width="40.3" height="1.1" fill="#1e6b3c" />
<rect x="373.1" y="232" width="2" height="13" fill="#1e6b3c" />
<rect x="412.2" y="232" width="1.1" height="8.5" fill="#1e6b3c" />
<rect x="373.1" y="243" width="37.5" height="2" fill="#1e6b3c" />
<rect x="410" y="241.9" width="4.2" height="3.2" fill="#1e6b3c" />
<rect x="0" y="605" width="1024" height="18.6" fill="#2b2b2b" />
<rect x="0" y="605" width="1024" height="1" fill="#1f1f1f" />
<rect x="43" y="605" width="145" height="18.6" fill="#1e1e1e" />
<path d="M10.5 615.2 L15.8 611.5 V619 Z" stroke="none" stroke-width="1" fill="#575757" />
<path d="M32 615.2 L26.9 611.5 V619 Z" stroke="none" stroke-width="1" fill="#575757" />
<text x="55" y="616.8" font-size="9" fill="#8e8e8e" style="font-family:&quot;Liberation Sans&quot;,sans-serif" textLength="40.2" lengthAdjust="spacingAndGlyphs" >SalesData</text>
<rect x="107" y="609" width="1" height="11" fill="#333333" />
<text x="120.2" y="616.8" font-size="9" fill="#8e8e8e" style="font-family:&quot;Liberation Sans&quot;,sans-serif" textLength="55" lengthAdjust="spacingAndGlyphs" >PreviousSales</text>
<rect x="188" y="605" width="156" height="15.6" fill="#ffffff" />
<text x="203.8" y="616.8" font-size="9" fill="#1f7a47" style="font-family:&quot;Liberation Sans&quot;,sans-serif" font-weight="700" textLength="124.5" lengthAdjust="spacingAndGlyphs" >SalesData Database Functions</text>
<path d="M358.5 611.2 V618.3 M355 614.75 H362" stroke="#bdbdbd" stroke-width="1" fill="none" />
<rect x="371" y="609" width="1" height="11" fill="#444444" />
<defs><linearGradient id="sg" x1="0" y1="0" x2="0" y2="1"><stop offset="0" stop-color="#3f3f3f"/><stop offset="1" stop-color="#363636"/></linearGradient></defs>
<rect x="0" y="623.6" width="1024" height="16.4" fill="url(#sg)" />
<text x="17.5" y="634.8" font-size="8.8" fill="#dedede" style="font-family:&quot;Liberation Sans&quot;,sans-serif" textLength="24.5" lengthAdjust="spacingAndGlyphs" >Ready</text>
<circle cx="60.5" cy="628.3" r="1.1" fill="none" stroke="#e0e0e0" stroke-width="0.8"/>
<path d="M56.6 630.2 C56.8 629.4 57.5 629.3 58.5 629.3 H63.8 C64.6 629.3 65 629.5 65 630" stroke="#e0e0e0" stroke-width="0.9" fill="none" />
<path d="M58.5 629.8 V636.3 M57.8 636.5 H60.2 M62.8 629.8 C62.6 630.6 62.5 631.5 62.5 632.6" stroke="#e0e0e0" stroke-width="0.9" fill="none" />
<path d="M61.6 634.4 L63.6 636.6 L66.9 633" stroke="#e0e0e0" stroke-width="0.9" fill="none" />
<text x="69" y="634.8" font-size="8.8" fill="#dedede" style="font-family:&quot;Liberation Sans&quot;,sans-serif" textLength="100.5" lengthAdjust="spacingAndGlyphs" >Accessibility: Good to go</text>
<rect x="797" y="623.6" width="26.4" height="16.4" fill="#4e4e4e" />
<rect x="806" y="627.0" width="9" height="0.9" fill="#e0e0e0" />
<rect x="806" y="629.9" width="9" height="0.9" fill="#e0e0e0" />
<rect x="806" y="632.8" width="9" height="0.9" fill="#e0e0e0" />
<rect x="806" y="635.7" width="9" height="0.9" fill="#e0e0e0" />
<rect x="806.3" y="627" width="0.9" height="9.3" fill="#e0e0e0" />
<rect x="809.0999999999999" y="627" width="0.9" height="9.3" fill="#e0e0e0" />
<rect x="811.9" y="627" width="0.9" height="9.3" fill="#e0e0e0" />
<rect x="814.6999999999999" y="627" width="0.9" height="9.3" fill="#e0e0e0" />
<rect x="831" y="627" width="10" height="9.3" fill="none" stroke="#e0e0e0" stroke-width="0.9"/>
<rect x="834" y="628.5" width="4" height="5" fill="none" stroke="#e0e0e0" stroke-width="0.8"/>
<path d="M856.3 636.5 V627.2 H865.8 V636.5 H859.5 V633 H865.8 M859.5 627.2 V633 M862.5 627.2 V630.5" stroke="#e0e0e0" stroke-width="0.9" fill="none" />
<rect x="880" y="631.6" width="5" height="1.4" fill="#e6e6e6" />
<rect x="890" y="631.3" width="71" height="2.6" fill="#7a7a7a" rx="1.3" />
<circle cx="925.6" cy="631.7" r="5.8" fill="#9c9c9c"/>
<path d="M969 628.8 V635.2 M965.8 632 H972.2" stroke="#eeeeee" stroke-width="1.4" fill="none" />
<text x="983.8" y="634.7" font-size="8.8" fill="#e0e0e0" style="font-family:&quot;Liberation Sans&quot;,sans-serif" textLength="22.5" lengthAdjust="spacingAndGlyphs" >100%</text>
</svg>
</body></html>
